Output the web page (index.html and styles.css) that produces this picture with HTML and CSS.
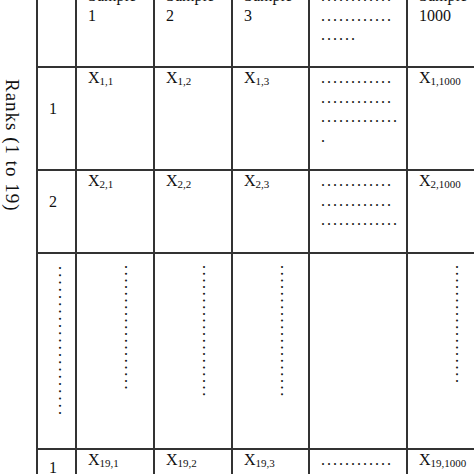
FILE: index.html
```html
<!DOCTYPE html>
<html>
<head>
<meta charset="utf-8">
<link rel="stylesheet" href="styles.css">
</head>
<body>
<div class="grid">
  <div class="blank"></div>
  <div class="cell"></div>
  <div class="cell">Sample<br>1</div>
  <div class="cell">Sample<br>2</div>
  <div class="cell">Sample<br>3</div>
  <div class="cell dots">............<br>............<br>......</div>
  <div class="cell">Sample<br>1000</div>

  <div class="label"><span class="label-text">Ranks (1 to 19)</span></div>
  <div class="cell rank">1</div>
  <div class="cell">X<sub>1,1</sub></div>
  <div class="cell">X<sub>1,2</sub></div>
  <div class="cell">X<sub>1,3</sub></div>
  <div class="cell dots">............<br>............<br>.............<br>.</div>
  <div class="cell">X<sub>1,1000</sub></div>

  <div class="cell rank">2</div>
  <div class="cell">X<sub>2,1</sub></div>
  <div class="cell">X<sub>2,2</sub></div>
  <div class="cell">X<sub>2,3</sub></div>
  <div class="cell dots">............<br>............<br>.............</div>
  <div class="cell">X<sub>2,1000</sub></div>

  <div class="cell vcell vrank"><span class="vdots wide">.....................</span></div>
  <div class="cell vcell"><span class="vdots">...................</span></div>
  <div class="cell vcell"><span class="vdots">....................</span></div>
  <div class="cell vcell"><span class="vdots">....................</span></div>
  <div class="cell"></div>
  <div class="cell vcell"><span class="vdots">..................</span></div>

  <div class="cell rank">1</div>
  <div class="cell">X<sub>19,1</sub></div>
  <div class="cell">X<sub>19,2</sub></div>
  <div class="cell">X<sub>19,3</sub></div>
  <div class="cell dots">............</div>
  <div class="cell">X<sub>19,1000</sub></div>
</div>
</body>
</html>
```

FILE: styles.css
```css
html, body {
  margin: 0;
  padding: 0;
  background: #ffffff;
}

body {
  width: 474px;
  height: 474px;
  overflow: hidden;
  font-family: "Liberation Serif", "Times New Roman", serif;
  font-size: 16px;
  line-height: 19.6px;
  color: #111111;
}

.grid {
  display: grid;
  grid-template-columns: 36px 39px 78px 78px 77px 98px 68px;
  grid-template-rows: 86px 103px 83px 196px 58px;
  margin-top: -20px;
}

.cell {
  box-sizing: border-box;
  border-left: 2px solid #333333;
  border-top: 2px solid #333333;
  padding: 0 0 0 11px;
  white-space: nowrap;
}

.grid > .cell:nth-child(-n+7) {
  padding-top: 4px;
}

sub {
  font-size: 11px;
  line-height: 1;
  vertical-align: -2px;
}

.dots {
  letter-spacing: 2px;
}

.rank {
  display: flex;
  align-items: center;
  padding-bottom: 19.6px;
}

.label {
  grid-row: 2 / 6;
  grid-column: 1;
  padding-top: 13px;
  padding-left: 1px;
}

.label-text {
  display: inline-block;
  writing-mode: vertical-rl;
  font-size: 19px;
  letter-spacing: 1px;
  line-height: 22px;
}

.vcell {
  padding-top: 11px;
  padding-left: 45px;
}

.vrank {
  padding-left: 18px;
  padding-top: 12px;
}

.vdots {
  display: inline-block;
  writing-mode: vertical-rl;
  letter-spacing: 2.7px;
  line-height: 16px;
}

.vdots.wide {
  letter-spacing: 3.25px;
}
```
